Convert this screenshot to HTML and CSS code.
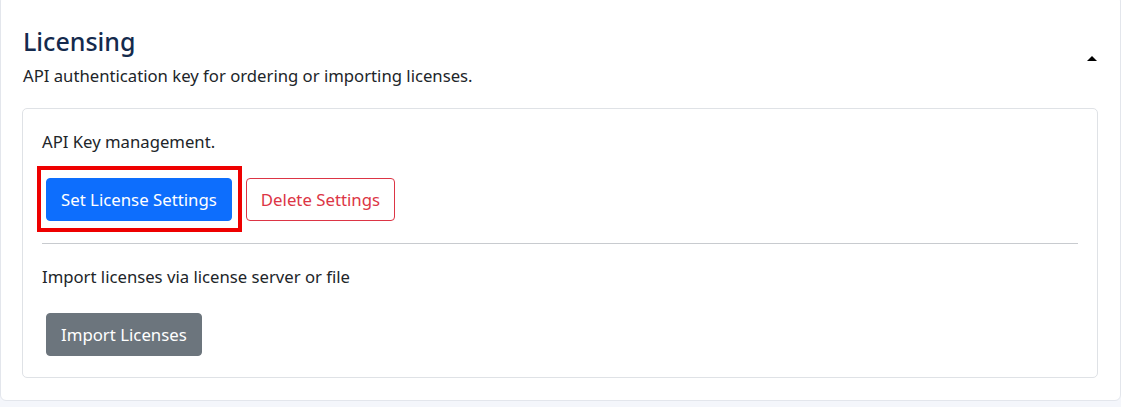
FILE: index.html
```html
<!DOCTYPE html>
<html lang="en">
<head>
<meta charset="utf-8">
<title>Licensing</title>
<link rel="stylesheet" href="styles.css">
</head>
<body>
<section class="card">
  <header class="card-head">
    <div>
      <h2 class="title">Licensing</h2>
      <p class="subtitle">API authentication key for ordering or importing licenses.</p>
    </div>
    <span class="caret" aria-hidden="true"></span>
  </header>
  <div class="inner">
    <p class="label">API Key management.</p>
    <div class="actions">
      <span class="highlight-wrap">
        <button class="btn btn-primary">Set License Settings</button>
        <span class="highlight"></span>
      </span>
      <button class="btn btn-outline-danger">Delete Settings</button>
    </div>
    <hr class="divider">
    <p class="label">Import licenses via license server or file</p>
    <div class="actions">
      <button class="btn btn-secondary">Import Licenses</button>
    </div>
  </div>
</section>
</body>
</html>
```
FILE: styles.css
```css
* { box-sizing: border-box; }
html, body { margin: 0; padding: 0; }
body {
  background: #f4f6fb;
  font-family: "Noto Sans", "Open Sans", sans-serif;
  color: #212529;
  width: 1121px;
  height: 407px;
  overflow: hidden;
}
.card {
  margin-top: -5px;
  width: 1121px;
  height: 406px;
  background: #fff;
  border: 1px solid #e3e6ec;
  border-radius: 6px;
  padding: 30px 22px 0 21px;
}
.card-head {
  display: flex;
  justify-content: space-between;
  align-items: center;
}
.title {
  margin: 0;
  font-size: 25px;
  font-weight: 500;
  line-height: 1.2;
  color: #142a4d;
  padding-left: 1px;
}
.subtitle {
  margin: 8px 0 0 1px;
  font-size: 16.7px;
  line-height: 24px;
}
.caret {
  width: 0; height: 0;
  border-left: 5px solid transparent;
  border-right: 5px solid transparent;
  border-bottom: 5px solid #000;
  margin-right: 1px;
  margin-top: 2px;
}
.inner {
  margin-top: 20px;
  border: 1px solid #dfe2e6;
  border-radius: 5px;
  padding: 21px 19px 21px 19px;
}
.label {
  margin: 0;
  font-size: 16.7px;
  line-height: 24px;
}
.actions {
  display: flex;
  gap: 14px;
  margin-top: 24px;
  padding-left: 4px;
}
.btn {
  font-family: inherit;
  font-size: 16.8px;
  line-height: 25px;
  padding: 8px 14px;
  border-radius: 4px;
  border: 1px solid transparent;
  cursor: pointer;
  white-space: nowrap;
}
.btn-primary { background: #0d6efd; color: #fff; border-color: #0d6efd; }
.btn-outline-danger { background: #fff; color: #dc3545; border-color: #dc3545; }
.btn-secondary { background: #6c757d; color: #fff; border-color: #6c757d; }
.highlight-wrap { position: relative; display: inline-flex; }
.highlight {
  position: absolute;
  left: -9px; right: -10px; top: -12px; bottom: -11px;
  border: 4px solid #ee0000;
  pointer-events: none;
}
.divider {
  margin: 22px 0 21px;
  border: 0;
  border-top: 1px solid #c8cbcf;
}
```
